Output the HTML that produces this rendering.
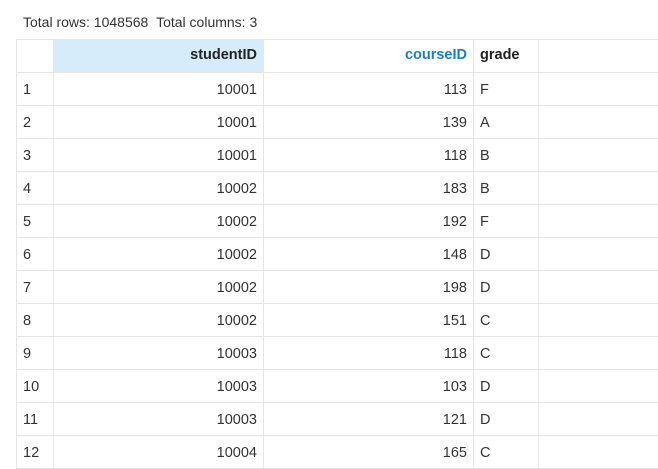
<!DOCTYPE html>
<html><head><style>
body{margin:0;width:658px;height:445px;overflow:hidden;background:#fff;font-family:"Liberation Sans",sans-serif;color:#333;}
.t{position:absolute;left:23px;top:14px;font-size:14px;color:#333;}
table{position:absolute;left:16px;top:39px;border-collapse:collapse;table-layout:fixed;width:700px;}
td,th{border:1px solid #e6e6e6;height:33px;padding:1px 6px 0 6px;font-size:14.5px;white-space:nowrap;overflow:hidden;box-sizing:border-box;}
th{font-weight:bold;color:#222;padding:0 6px 3px 6px;}
td{color:#333;}
.r{text-align:right;}
.l{text-align:left;}
</style></head><body>
<div class="t">Total rows: 1048568&nbsp;&nbsp;Total columns: 3</div>
<table>
<colgroup><col style="width:37px"><col style="width:210px"><col style="width:210px"><col style="width:65px"><col></colgroup>
<tr><th></th><th class="r" style="background:#d6ecfa">studentID</th><th class="r" style="color:#1a7ec2">courseID</th><th class="l">grade</th><th></th></tr>
<tr><td>1</td><td class="r">10001</td><td class="r">113</td><td>F</td><td></td></tr>
<tr><td>2</td><td class="r">10001</td><td class="r">139</td><td>A</td><td></td></tr>
<tr><td>3</td><td class="r">10001</td><td class="r">118</td><td>B</td><td></td></tr>
<tr><td>4</td><td class="r">10002</td><td class="r">183</td><td>B</td><td></td></tr>
<tr><td>5</td><td class="r">10002</td><td class="r">192</td><td>F</td><td></td></tr>
<tr><td>6</td><td class="r">10002</td><td class="r">148</td><td>D</td><td></td></tr>
<tr><td>7</td><td class="r">10002</td><td class="r">198</td><td>D</td><td></td></tr>
<tr><td>8</td><td class="r">10002</td><td class="r">151</td><td>C</td><td></td></tr>
<tr><td>9</td><td class="r">10003</td><td class="r">118</td><td>C</td><td></td></tr>
<tr><td>10</td><td class="r">10003</td><td class="r">103</td><td>D</td><td></td></tr>
<tr><td>11</td><td class="r">10003</td><td class="r">121</td><td>D</td><td></td></tr>
<tr><td>12</td><td class="r">10004</td><td class="r">165</td><td>C</td><td></td></tr>
</table>
</body></html>
